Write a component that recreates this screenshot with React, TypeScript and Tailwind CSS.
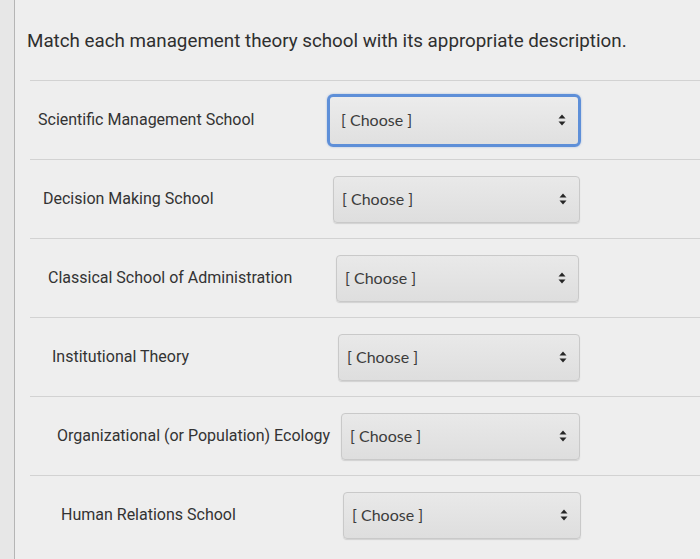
import React from 'react'

const rows = [
  { label: 'Scientific Management School', pad: 'pl-[8px]', lab: 'w-[289px]', sel: 'w-[254px]', focused: true },
  { label: 'Decision Making School', pad: 'pl-[13px]', lab: 'w-[290px]', sel: 'w-[247px]', focused: false },
  { label: 'Classical School of Administration', pad: 'pl-[18px]', lab: 'w-[288px]', sel: 'w-[243px]', focused: false },
  { label: 'Institutional Theory', pad: 'pl-[22px]', lab: 'w-[286px]', sel: 'w-[242px]', focused: false },
  { label: 'Organizational (or Population) Ecology', pad: 'pl-[27px]', lab: 'w-[284px]', sel: 'w-[239px]', focused: false },
  { label: 'Human Relations School', pad: 'pl-[31px]', lab: 'w-[282px]', sel: 'w-[238px]', focused: false },
]

function Arrows() {
  return (
    <svg width="8" height="12" viewBox="0 0 8 12" className="shrink-0">
      <path d="M4 0.5 L7.5 4.6 L0.5 4.6 Z" fill="#262626" />
      <path d="M4 11.5 L7.5 7.4 L0.5 7.4 Z" fill="#262626" />
    </svg>
  )
}

function Select({ focused, width }: { focused: boolean; width: string }) {
  return (
    <div
      className={
        focused
          ? `flex items-center justify-between ${width} h-[53px] rounded-[6px] border-[3px] border-[#5e8fd8] bg-gradient-to-b from-[#ececec] to-[#e0e0e0] pl-[11px] pr-[12px] shadow-[0_0_2px_rgba(80,130,210,0.5)]`
          : `flex items-center justify-between ${width} h-[47px] rounded-[4px] border border-[#c9c9c9] bg-gradient-to-b from-[#e9e9e9] to-[#dedede] pl-[8px] pr-[12px] shadow-[0_1px_1px_rgba(0,0,0,0.12)]`
      }
    >
      <span className="font-['Lato'] text-[16px] text-[#3c3c3c] leading-none">[ Choose ]</span>
      <Arrows />
    </div>
  )
}

export default function App() {
  return (
    <div className="w-[700px] h-[559px] overflow-hidden bg-[#e7e7e7] font-['Roboto',sans-serif]">
      <div className="ml-[14px] h-full border-l border-[#b5b5b5] bg-[#eeeeee] pt-[28px]">
        <h1 className="pl-[12px] text-[18.8px] leading-[27px] text-[#2f2f2f]">
          Match each management theory school with its appropriate description.
        </h1>
        <div className="mt-[25px] ml-[15px]">
          {rows.map((row, i) => (
            <div
              key={i}
              className={`flex items-center h-[79px] border-t border-[#d2d2d2] ${row.pad}`}
            >
              <div className={`${row.lab} shrink-0 text-[16px] text-[#333]`}>{row.label}</div>
              <Select focused={row.focused} width={row.sel} />
            </div>
          ))}
        </div>
      </div>
    </div>
  )
}
